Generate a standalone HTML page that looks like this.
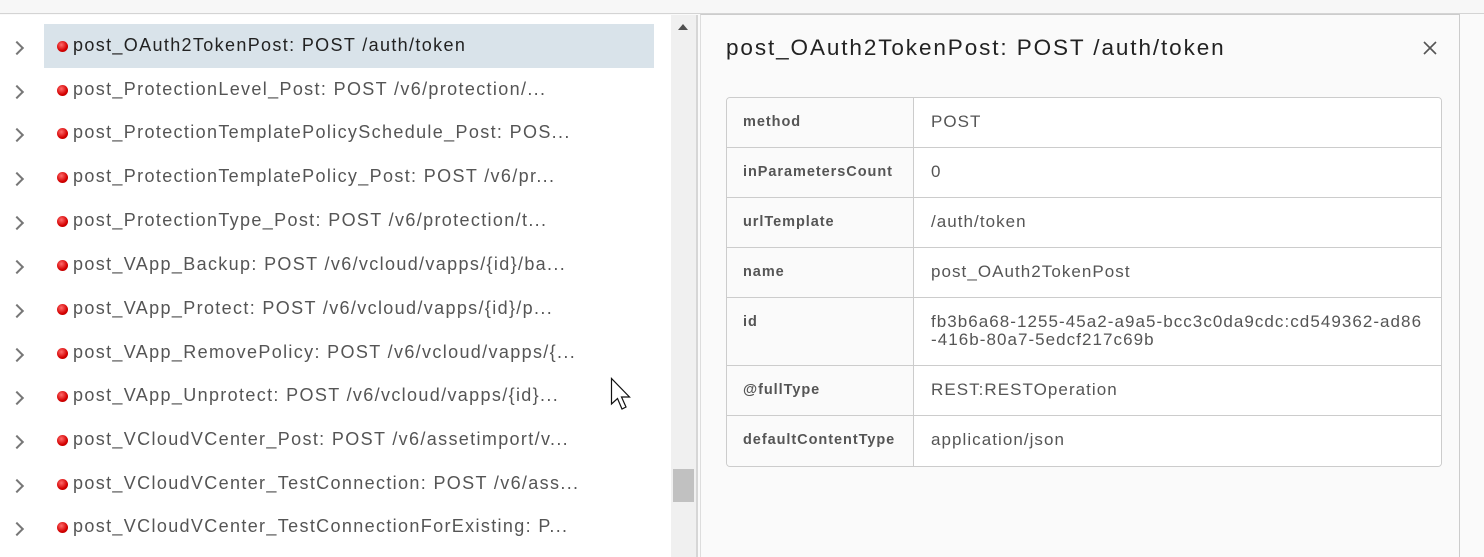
<!DOCTYPE html>
<html><head><meta charset="utf-8"><style>
*{margin:0;padding:0;box-sizing:border-box}
body{width:1484px;height:557px;overflow:hidden;background:#fafafa;font-family:"Liberation Sans",sans-serif;position:relative}
.top{position:absolute;left:0;top:0;width:1484px;height:14px;background:#f7f7f7;border-bottom:1px solid #d4d4d4}
.left{position:absolute;left:0;top:15px;width:671px;height:542px;background:#fff}
.row{position:absolute;left:0;height:44px;width:671px}
.row .chev{position:absolute;left:12px;top:19px;width:10px;height:10px;border-right:2px solid #777;border-top:2px solid #777;transform:rotate(45deg)}
.row .dot{position:absolute;left:57px;top:17px;width:11px;height:11px;border-radius:50%;background:radial-gradient(circle at 40% 35%,#ff6b6b,#d40000 60%,#a00000)}
.row .t{position:absolute;left:73px;top:11px;font-size:18px;color:#555;letter-spacing:1.35px;white-space:nowrap}
.row.sel .hl{position:absolute;left:44px;top:0;width:610px;height:44px;background:#d9e3ea}
.row.sel .t{color:#222}
.sb{position:absolute;left:671px;top:15px;width:25px;height:542px;background:#f0f0f0}
.sb .up{position:absolute;left:7px;top:9px;width:0;height:0;border-left:5px solid transparent;border-right:5px solid transparent;border-bottom:6px solid #505050}
.sb .th{position:absolute;left:2px;top:454px;width:21px;height:33px;background:#c1c1c1}
.div{position:absolute;left:696px;top:15px;width:2px;height:542px;background:#d6d6d6}
.panel{position:absolute;left:700px;top:14px;width:760px;height:543px;background:#fafafa;border-left:1px solid #ddd;border-right:1px solid #ccc;border-top:1px solid #ccc}
.title{position:absolute;left:726px;top:35px;font-size:22.5px;color:#222;letter-spacing:1.9px;white-space:nowrap}
.x{position:absolute;left:1423px;top:41px;width:14px;height:14px}
table{position:absolute;left:726px;top:97px;width:716px;border-collapse:separate;border-spacing:0;border:1px solid #ccc;border-radius:4px;overflow:hidden}
td{border-bottom:1px solid #ccc;vertical-align:top;height:50px}
tr:last-child td{border-bottom:none}
td.k{width:187px;background:#fafafa;border-right:1px solid #ccc;padding:16px 0 0 16px;font-size:14.5px;font-weight:bold;color:#555;letter-spacing:0.95px}
td.v{background:#fff;padding:15px 0 0 17px;font-size:17px;color:#555;letter-spacing:1.05px;line-height:18px}
</style></head><body>
<div class="top"></div>
<div class="left">
<div class="row sel" style="top:9px"><div class="hl"></div><div class="chev"></div><div class="dot"></div><div class="t">post_OAuth2TokenPost: POST /auth/token</div></div>
<div class="row" style="top:53px"><div class="chev"></div><div class="dot"></div><div class="t">post_ProtectionLevel_Post: POST /v6/protection/...</div></div>
<div class="row" style="top:96px"><div class="chev"></div><div class="dot"></div><div class="t">post_ProtectionTemplatePolicySchedule_Post: POS...</div></div>
<div class="row" style="top:140px"><div class="chev"></div><div class="dot"></div><div class="t">post_ProtectionTemplatePolicy_Post: POST /v6/pr...</div></div>
<div class="row" style="top:184px"><div class="chev"></div><div class="dot"></div><div class="t">post_ProtectionType_Post: POST /v6/protection/t...</div></div>
<div class="row" style="top:228px"><div class="chev"></div><div class="dot"></div><div class="t">post_VApp_Backup: POST /v6/vcloud/vapps/{id}/ba...</div></div>
<div class="row" style="top:272px"><div class="chev"></div><div class="dot"></div><div class="t">post_VApp_Protect: POST /v6/vcloud/vapps/{id}/p...</div></div>
<div class="row" style="top:316px"><div class="chev"></div><div class="dot"></div><div class="t">post_VApp_RemovePolicy: POST /v6/vcloud/vapps/{...</div></div>
<div class="row" style="top:359px"><div class="chev"></div><div class="dot"></div><div class="t">post_VApp_Unprotect: POST /v6/vcloud/vapps/{id}...</div></div>
<div class="row" style="top:403px"><div class="chev"></div><div class="dot"></div><div class="t">post_VCloudVCenter_Post: POST /v6/assetimport/v...</div></div>
<div class="row" style="top:447px"><div class="chev"></div><div class="dot"></div><div class="t">post_VCloudVCenter_TestConnection: POST /v6/ass...</div></div>
<div class="row" style="top:490px"><div class="chev"></div><div class="dot"></div><div class="t">post_VCloudVCenter_TestConnectionForExisting: P...</div></div>
<svg style="position:absolute;left:610px;top:362px" width="28" height="40" viewBox="0 0 28 40"><path d="M1.5 1.5 L1.5 27 L7.5 21.5 L12 32 L16 30 L11.5 20 L19.5 20 Z" fill="#fff" stroke="#111" stroke-width="1.2" stroke-linejoin="miter"/></svg>
</div>
<div class="sb"><div class="up"></div><div class="th"></div></div>
<div class="div"></div>
<div class="panel"></div>
<div class="title">post_OAuth2TokenPost: POST /auth/token</div>
<svg class="x" viewBox="0 0 14 14"><path d="M1 1L13 13M13 1L1 13" stroke="#555" stroke-width="1.6"/></svg>
<table>
<tr><td class="k">method</td><td class="v">POST</td></tr>
<tr><td class="k">inParametersCount</td><td class="v">0</td></tr>
<tr><td class="k">urlTemplate</td><td class="v">/auth/token</td></tr>
<tr><td class="k">name</td><td class="v">post_OAuth2TokenPost</td></tr>
<tr><td class="k" style="height:68px">id</td><td class="v">fb3b6a68-1255-45a2-a9a5-bcc3c0da9cdc:cd549362-ad86<br>-416b-80a7-5edcf217c69b</td></tr>
<tr><td class="k">@fullType</td><td class="v">REST:RESTOperation</td></tr>
<tr><td class="k">defaultContentType</td><td class="v">application/json</td></tr>
</table>
</body></html>
